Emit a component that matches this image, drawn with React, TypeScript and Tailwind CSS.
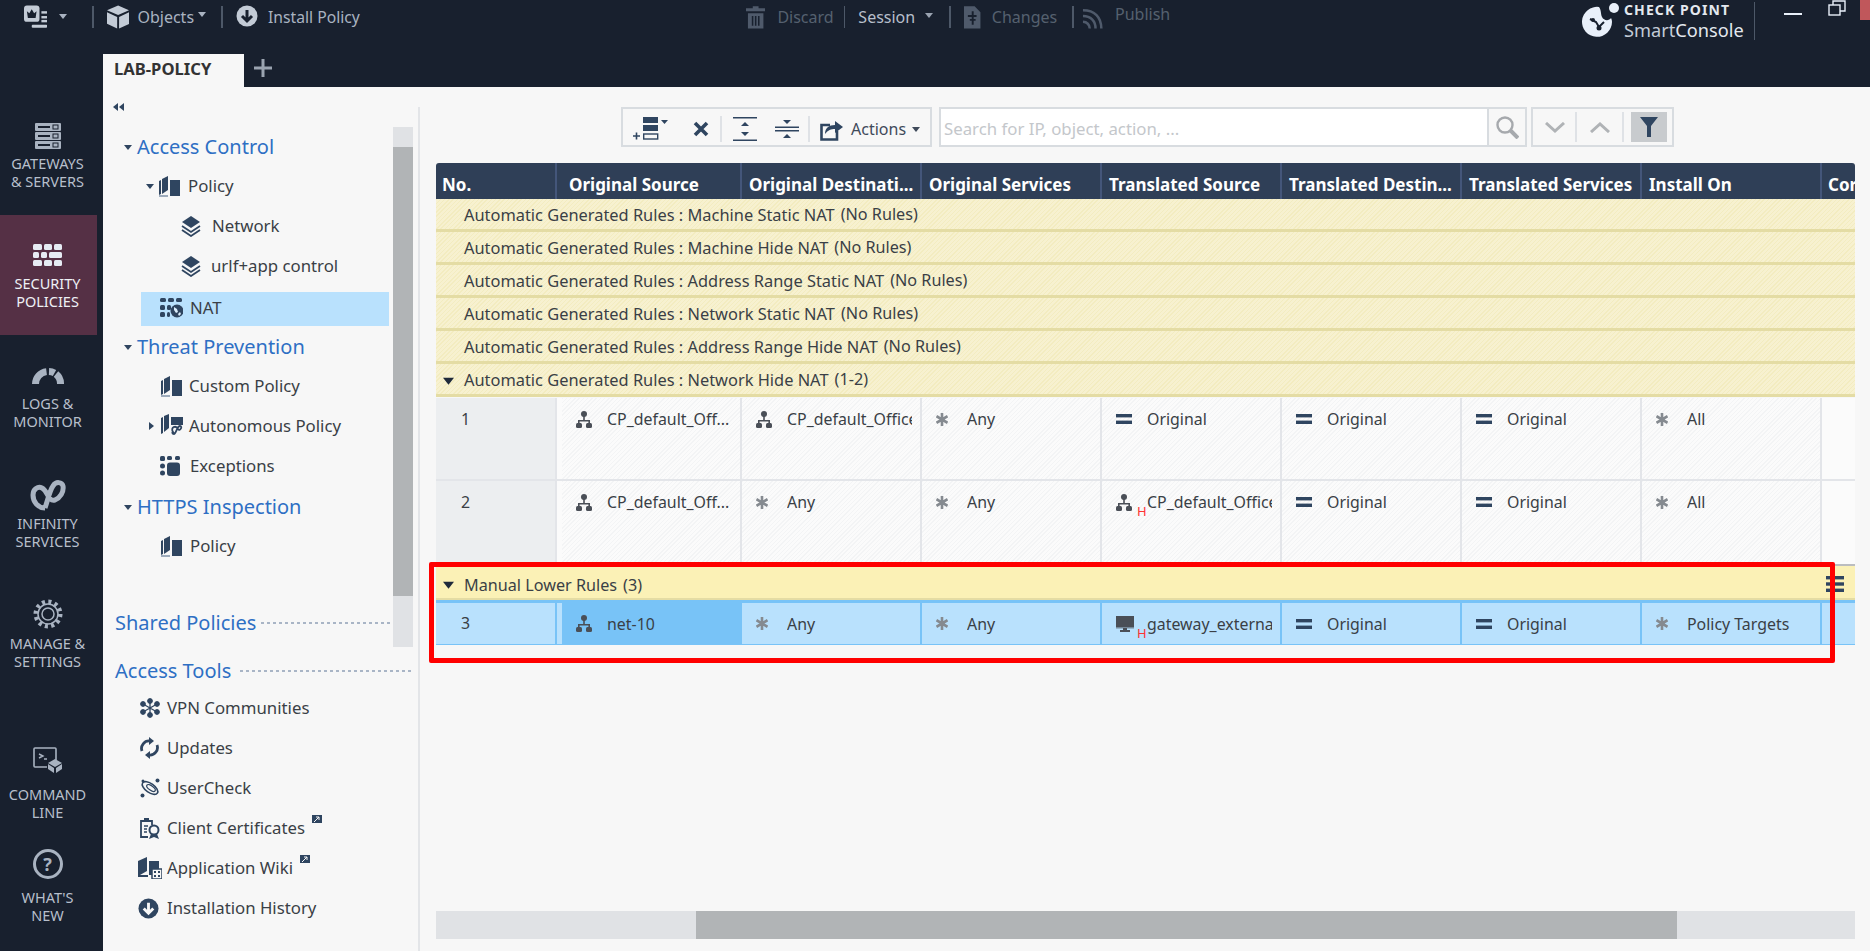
import React from 'react'

const NAVY = '#2f4560'

function Caret({ dir = 'down', color = '#2f4560', size = 8 }: { dir?: 'down' | 'right'; color?: string; size?: number }) {
  return (
    <svg width={size} height={size} viewBox="0 0 8 8" className="shrink-0">
      {dir === 'down' ? <polygon points="0,2 8,2 4,7" fill={color} /> : <polygon points="1,0 6,4 1,8" fill={color} />}
    </svg>
  )
}

function BookIcon() {
  return (
    <svg width="22" height="21" viewBox="0 0 22 21">
      <path d="M1 19V5l2-1v14z" fill={NAVY} />
      <path d="M4 3l6-3v14l-6 4z" fill={NAVY} />
      <rect x="12" y="4" width="10" height="16" fill={NAVY} />
      <path d="M1 20h9" stroke="#7f92a9" strokeWidth="1.5" />
    </svg>
  )
}

function LayersIcon() {
  return (
    <svg width="20" height="22" viewBox="0 0 20 22" fill="none">
      <polygon points="10,1 19,7 10,13 1,7" fill={NAVY} />
      <polyline points="1,11 10,17 19,11" stroke={NAVY} strokeWidth="1.8" />
      <polyline points="1,15 10,21 19,15" stroke={NAVY} strokeWidth="1.8" />
    </svg>
  )
}

function NatIcon() {
  return (
    <svg width="23" height="20" viewBox="0 0 23 20" fill={NAVY}>
      <rect x="0" y="0" width="6" height="4" rx="1.5" /><rect x="8" y="0" width="6" height="4" rx="1.5" /><rect x="16" y="0" width="6" height="4" rx="1.5" />
      <rect x="0" y="7" width="5" height="5" rx="1.5" /><rect x="7" y="7" width="4" height="5" rx="1.5" />
      <rect x="0" y="14" width="5" height="5" rx="1.5" /><rect x="7" y="14" width="3" height="5" rx="1.5" />
      <circle cx="17" cy="13" r="6.5" />
      <path d="M14 9l3 2 1 3-2 1-2-3zM18 16l2-2 1 2-2 2z" fill="#dbeefc" />
    </svg>
  )
}

function AutonomousIcon() {
  return (
    <svg width="24" height="24" viewBox="0 0 24 24" fill="none">
      <path d="M1 20V4l2-1v16z" fill={NAVY} />
      <path d="M4 2l5-2v14l-5 4z" fill={NAVY} />
      <path d="M11 3h12v8H11z" fill={NAVY} />
      <path d="M13 18c-3-5 3-7 5-3 2 3 5-3 2-3-3 0-4 8-6 8-2 0-2-2-1-2z" stroke={NAVY} strokeWidth="1.8" />
    </svg>
  )
}

function ExceptionsIcon() {
  return (
    <svg width="20" height="20" viewBox="0 0 20 20" fill={NAVY}>
      <rect x="0" y="0" width="5" height="5" rx="1.5" /><rect x="7" y="0" width="5" height="4" rx="1.5" /><rect x="15" y="0" width="5" height="4" rx="1.5" />
      <circle cx="2.5" cy="10" r="2.5" /><circle cx="2.5" cy="17" r="2.5" />
      <rect x="7" y="6.5" width="13" height="13.5" rx="3" />
    </svg>
  )
}

function VpnIcon() {
  return (
    <svg width="20" height="20" viewBox="0 0 20 20" fill={NAVY} stroke={NAVY}>
      <path d="M10 3v14M3 6l14 8M17 6L3 14" strokeWidth="1.3" />
      <circle cx="10" cy="3" r="2.4" /><circle cx="10" cy="17" r="2.4" /><circle cx="3" cy="6" r="2.4" /><circle cx="17" cy="6" r="2.4" /><circle cx="3" cy="14" r="2.4" /><circle cx="17" cy="14" r="2.4" />
    </svg>
  )
}

function UpdatesIcon() {
  return (
    <svg width="19" height="22" viewBox="0 0 19 22" fill="none">
      <path d="M2 14A7.5 7.5 0 0 1 10 4" stroke={NAVY} strokeWidth="2.8" />
      <polygon points="9,0 14,4 9,8" fill={NAVY} />
      <path d="M17 8a7.5 7.5 0 0 1-8 10" stroke={NAVY} strokeWidth="2.8" />
      <polygon points="10,14 5,18 10,22" fill={NAVY} />
    </svg>
  )
}

function UserCheckIcon() {
  return (
    <svg width="20" height="20" viewBox="0 0 20 20" fill="none">
      <ellipse cx="10" cy="10" rx="9" ry="4.5" transform="rotate(35 10 10)" stroke={NAVY} strokeWidth="1.6" />
      <ellipse cx="11" cy="10" rx="5" ry="2.2" transform="rotate(35 11 10)" stroke={NAVY} strokeWidth="1.2" />
      <circle cx="17.5" cy="2.5" r="2" fill={NAVY} /><circle cx="2.5" cy="17.5" r="2" fill={NAVY} /><circle cx="3" cy="3" r="1.5" fill={NAVY} />
    </svg>
  )
}

function CertIcon() {
  return (
    <svg width="21" height="22" viewBox="0 0 21 22" fill="none">
      <path d="M8 20H1V4h11v4" stroke={NAVY} strokeWidth="1.8" />
      <rect x="4" y="1" width="5" height="4" fill={NAVY} />
      <path d="M4 9h4M4 12h3M4 15h3" stroke={NAVY} strokeWidth="1.5" />
      <circle cx="14" cy="13" r="4.5" stroke={NAVY} strokeWidth="2" />
      <path d="M11 17l-2 5 5-2 5 2-2-5z" fill={NAVY} />
    </svg>
  )
}

function WikiIcon() {
  return (
    <svg width="25" height="22" viewBox="0 0 25 22">
      <path d="M1 18V4l9-4v14l-7 4z" fill={NAVY} />
      <path d="M1 19h10" stroke={NAVY} strokeWidth="2" />
      <rect x="12" y="4" width="10" height="14" fill={NAVY} />
      <rect x="15" y="12" width="10" height="10" fill="#f7f7f7" stroke={NAVY} strokeWidth="1.5" />
      <rect x="17" y="14" width="2" height="2" fill={NAVY} /><rect x="21" y="14" width="2" height="2" fill={NAVY} /><rect x="17" y="18" width="2" height="2" fill={NAVY} /><rect x="21" y="18" width="2" height="2" fill={NAVY} />
    </svg>
  )
}

function DownCircle({ size = 22, bg = NAVY, fg = '#f7f7f7' }: { size?: number; bg?: string; fg?: string }) {
  return (
    <svg width={size} height={size} viewBox="0 0 22 22" fill="none">
      <circle cx="11" cy="11" r="10.5" fill={bg} />
      <path d="M11 5v11M6 11l5 5 5-5" stroke={fg} strokeWidth="3" />
    </svg>
  )
}

function ExtLink() {
  return (
    <svg width="10" height="8" viewBox="0 0 10 8" className="mb-[18px] ml-[7px]">
      <rect width="10" height="8" fill={NAVY} />
      <path d="M2 7l5-5M4 2h3v3" stroke="#f7f7f7" strokeWidth="1" fill="none" />
    </svg>
  )
}

function TreeRow({ indent, caret, icon, iconW, label }: {
  indent: string
  caret?: 'down' | 'right'
  icon?: React.ReactNode
  iconW?: string
  label: string
}) {
  return (
    <div className={`flex h-[40px] items-center pb-[2px] text-[16.8px] text-[#3a3f46] whitespace-nowrap ${indent}`}>
      {caret && <span className="flex w-[12px] items-center"><Caret dir={caret} /></span>}
      {icon && <span className={`flex items-center ${iconW ?? ''}`}>{icon}</span>}
      <span>{label}</span>
    </div>
  )
}

function SectionRow({ label }: { label: string }) {
  return (
    <div className="flex h-[40px] items-center pl-[21px] text-[20px] text-[#2e6fc4] whitespace-nowrap">
      <span className="flex w-[13px] items-center"><Caret /></span>
      <span>{label}</span>
    </div>
  )
}

function ToolRow({ iconClass, icon, label, ext }: { iconClass: string; icon: React.ReactNode; label: string; ext?: boolean }) {
  return (
    <div className="flex h-[40px] items-center pb-[2px] text-[16.8px] text-[#3a3f46] whitespace-nowrap">
      <span className={`flex w-[64px] items-center ${iconClass}`}>{icon}</span>
      <span>{label}</span>
      {ext && <ExtLink />}
    </div>
  )
}

const DOTS = 'h-[2px] flex-1 bg-[repeating-linear-gradient(90deg,#a9b5c6_0,#a9b5c6_3px,transparent_3px,transparent_6px)]'

function TreePanel() {
  return (
    <div className="w-[315px] shrink-0 bg-[#f7f7f7]">
      <div className="flex h-[40px] items-center pl-[10px]">
        <svg width="11" height="8" viewBox="0 0 11 8" fill={NAVY}><polygon points="5,0 0,4 5,8" /><polygon points="11,0 6,4 11,8" /></svg>
      </div>
      <div className="flex h-[520px]">
        <div className="w-[290px]">
          <SectionRow label="Access Control" />
          <TreeRow indent="pl-[43px]" caret="down" icon={<BookIcon />} iconW="w-[30px]" label="Policy" />
          <TreeRow indent="pl-[78px]" icon={<LayersIcon />} iconW="w-[31px]" label="Network" />
          <TreeRow indent="pl-[78px]" icon={<LayersIcon />} iconW="w-[30px]" label="urlf+app control" />
          <div className="mb-[1px] ml-[38px] mr-[4px] mt-[5px] flex h-[34px] items-center bg-[#b9e1fd] pb-[3px] pl-[19px] text-[16.8px] text-[#3a3f46]">
            <span className="flex w-[30px] items-center"><NatIcon /></span>NAT
          </div>
          <SectionRow label="Threat Prevention" />
          <TreeRow indent="pl-[57px]" icon={<BookIcon />} iconW="w-[29px]" label="Custom Policy" />
          <TreeRow indent="pl-[45px]" caret="right" icon={<AutonomousIcon />} iconW="w-[29px]" label="Autonomous Policy" />
          <TreeRow indent="pl-[57px]" icon={<ExceptionsIcon />} iconW="w-[30px]" label="Exceptions" />
          <SectionRow label="HTTPS Inspection" />
          <TreeRow indent="pl-[57px]" icon={<BookIcon />} iconW="w-[30px]" label="Policy" />
          <div className="mt-[36px] flex h-[40px] items-center pl-[12px] text-[20px] text-[#2e6fc4]">
            <span className="whitespace-nowrap">Shared Policies</span>
            <span className={`ml-[5px] ${DOTS}`} />
          </div>
        </div>
        <div className="w-[20px] bg-[#e0e2e5] pb-[51px] pt-[20px]">
          <div className="h-full bg-[#b1b4b6]" />
        </div>
      </div>
      <div className="mt-[5px] flex h-[37px] items-center pl-[12px] text-[20px] text-[#2e6fc4]">
        <span className="whitespace-nowrap">Access Tools</span>
        <span className={`ml-[9px] mr-[7px] ${DOTS}`} />
      </div>
      <ToolRow iconClass="pl-[37px]" icon={<VpnIcon />} label="VPN Communities" />
      <ToolRow iconClass="pl-[37px]" icon={<UpdatesIcon />} label="Updates" />
      <ToolRow iconClass="pl-[37px]" icon={<UserCheckIcon />} label="UserCheck" />
      <ToolRow iconClass="pl-[37px]" icon={<CertIcon />} label="Client Certificates" ext />
      <ToolRow iconClass="pl-[34px]" icon={<WikiIcon />} label="Application Wiki" ext />
      <ToolRow iconClass="pl-[35px]" icon={<DownCircle size={21} />} label="Installation History" />
    </div>
  )
}

function RailItem({ label1, label2, icon, topClass, active, className }: {
  label1: string
  label2: string
  icon: React.ReactNode
  topClass: string
  active?: boolean
  className?: string
}) {
  return (
    <div className={`flex w-[97px] flex-col items-center pr-[2px] text-center text-[14.5px] leading-[18px] ${active ? 'bg-[#553045] text-[#eef1f6]' : 'text-[#b7bfcb]'} ${className ?? ''}`}>
      <div className={`flex h-[59px] items-start ${topClass}`}>{icon}</div>
      <div className="whitespace-nowrap">{label1}</div>
      <div className="whitespace-nowrap">{label2}</div>
    </div>
  )
}

function Rail() {
  const c = '#a9b3c1'
  return (
    <div className="w-[103px] shrink-0 bg-[#18202e] pt-[41px]">
      <RailItem className="h-[120px]" label1="GATEWAYS" label2="& SERVERS" topClass="pt-[28px]" icon={
        <svg width="26" height="26" viewBox="0 0 26 26">
          {[0, 9, 18].map(y => (
            <g key={y}>
              <rect x="0" y={y} width="26" height="8" rx="1" fill={c} />
              <rect x="3" y={y + 3} width="12" height="2" fill="#18202e" />
              <rect x="18" y={y + 2} width="5" height="4" fill="none" stroke="#18202e" />
            </g>
          ))}
        </svg>
      } />
      <RailItem className="h-[120px]" active label1="SECURITY" label2="POLICIES" topClass="pt-[29px]" icon={
        <svg width="29" height="22" viewBox="0 0 29 22" fill="#e6ebf3">
          <rect x="0" y="0" width="9" height="6" rx="1.5" /><rect x="11" y="0" width="8" height="6" rx="1.5" /><rect x="21" y="0" width="8" height="6" rx="1.5" />
          <rect x="0" y="8" width="6" height="6" rx="1.5" /><rect x="8" y="8" width="6" height="6" rx="1.5" /><rect x="16" y="8" width="13" height="6" rx="1.5" />
          <rect x="0" y="16" width="9" height="6" rx="1.5" /><rect x="11" y="16" width="8" height="6" rx="1.5" /><rect x="21" y="16" width="8" height="6" rx="1.5" />
        </svg>
      } />
      <RailItem className="h-[120px]" label1="LOGS &" label2="MONITOR" topClass="pt-[32px]" icon={
        <svg width="32" height="17" viewBox="0 0 32 17" fill="none" stroke={c} strokeWidth="7">
          <path d="M3.5 17A12.5 12.5 0 0 1 14.5 4.6" /><path d="M17 4.5a12.5 12.5 0 0 1 5.5 1.5" /><path d="M24 7a12.5 12.5 0 0 1 4.5 10" />
        </svg>
      } />
      <RailItem className="h-[120px]" label1="INFINITY" label2="SERVICES" topClass="pt-[24px]" icon={
        <svg width="36" height="32" viewBox="0 0 36 32" fill="none" stroke={c} strokeWidth="5">
          <path d="M15 29C8 29 3 23 3 16 3 10 8 7 12 9c6 3 6 14 13 12 5-2 9-8 8-14-1-4-7-5-10 0-3 4-5 13-8 22" />
        </svg>
      } />
      <RailItem className="h-[120px]" label1="MANAGE &" label2="SETTINGS" topClass="pt-[24px]" icon={
        <svg width="30" height="30" viewBox="0 0 30 30" fill="none" stroke={c}>
          <circle cx="15" cy="15" r="12" strokeWidth="5" strokeDasharray="3 3.28" />
          <circle cx="15" cy="15" r="10" strokeWidth="1.5" />
          <circle cx="15" cy="15" r="6" strokeWidth="1.5" />
        </svg>
      } />
      <RailItem className="mt-[31px] h-[103px]" label1="COMMAND" label2="LINE" topClass="pt-[21px]" icon={
        <svg width="30" height="26" viewBox="0 0 30 26" fill="none" stroke={c}>
          <path d="M14 20H2a1 1 0 0 1-1-1V2a1 1 0 0 1 1-1h20a1 1 0 0 1 1 1v11" strokeWidth="1.6" />
          <path d="M6 7l4 2-4 2M11 12h3" strokeWidth="1.4" />
          <polygon points="22,12 29,16 22,20 15,16" fill={c} stroke="none" />
          <polygon points="15,17 21,21 21,26 15,22" fill={c} stroke="none" /><polygon points="29,17 23,21 23,26 29,22" fill={c} stroke="none" />
        </svg>
      } />
      <RailItem className="h-[120px]" label1="WHAT'S" label2="NEW" topClass="pt-[20px]" icon={
        <div className="flex h-[30px] w-[30px] items-center justify-center rounded-full border-[3px] border-[#a9b3c1] text-[18px] font-bold leading-none text-[#a9b3c1]">?</div>
      } />
    </div>
  )
}

function Sep({ className }: { className: string }) {
  return <div className={`mt-[1px] h-[22px] w-[2px] shrink-0 bg-[#4d5868] ${className}`} />
}

function TopBar() {
  const c = '#c3cbd6'
  const dim = '#4f5a6b'
  return (
    <div className="flex h-[54px] shrink-0 items-start bg-[#18202e] pl-[24px] pt-[5px] text-[16px] leading-[24px] text-[#a9b3c1]">
      <svg width="24" height="24" viewBox="0 0 24 24" fill={c}>
        <rect x="0" y="0" width="16" height="17" rx="3" />
        <path d="M3 6l2.5 2L8 4l2.5 4L13 6l-1 7H4z" fill="#18202e" />
        <rect x="18" y="6" width="6" height="2.5" /><rect x="18" y="11" width="6" height="2.5" /><rect x="18" y="15" width="6" height="2.5" /><rect x="8" y="20" width="16" height="3" rx="1" />
      </svg>
      <span className="ml-[12px] mt-[7px]"><Caret color="#a9b3c1" /></span>
      <Sep className="ml-[25px]" />
      <svg width="23" height="24" viewBox="0 0 23 24" fill={c} className="ml-[13px]">
        <polygon points="11.5,0 23,5 11.5,10 0,5" /><polygon points="0,7 10.5,12 10.5,24 0,19" /><polygon points="23,7 12.5,12 12.5,24 23,19" />
      </svg>
      <span className="ml-[8px] w-[57px] whitespace-nowrap">Objects</span>
      <span className="ml-[4px] mt-[5px]"><Caret color="#a9b3c1" /></span>
      <Sep className="ml-[15px]" />
      <span className="ml-[13px]"><DownCircle size={22} bg={c} fg="#18202e" /></span>
      <span className="ml-[10px] w-[91px] whitespace-nowrap text-[15.7px]">Install Policy</span>
      <svg width="20" height="24" viewBox="0 0 20 24" fill={dim} className="ml-[387px]">
        <path d="M7 3V1h6v2h7v3H0V3z" /><path d="M2 8h16v16H2zM6 11v10h1.6V11zM9.2 11v10h1.6V11zM12.4 11v10H14V11z" fillRule="evenodd" />
      </svg>
      <span className="ml-[12px] w-[54px] whitespace-nowrap text-[#55606f]">Discard</span>
      <div className="ml-[13px] mt-[1px] h-[22px] w-px bg-[#4d5868]" />
      <span className="ml-[13px] w-[56px] whitespace-nowrap text-[#b7bfcb]">Session</span>
      <span className="ml-[11px] mt-[6px]"><Caret color="#9aa3b0" /></span>
      <Sep className="ml-[16px]" />
      <svg width="17" height="24" viewBox="0 0 17 24" fill={dim} className="ml-[13px]">
        <path d="M0 1h11l6 6v17H0zM8 6v4H4v2h4v2H6v2h2v4h2v-4h2v-2h-2v-2h3v-2h-3V6z" fillRule="evenodd" />
      </svg>
      <span className="ml-[11px] w-[65px] whitespace-nowrap text-[#55606f]">Changes</span>
      <Sep className="ml-[15px]" />
      <svg width="24" height="25" viewBox="0 0 24 25" fill="none" stroke={dim} strokeWidth="2.6" className="ml-[8px] -mt-px">
        <path d="M1 6c12 0 19 7 19 19" /><path d="M1 12c8 0 13 5 13 13" /><path d="M1 18c4 0 7 3 7 7" />
      </svg>
      <span className="ml-[10px] -mt-[3px] w-[53px] whitespace-nowrap text-[#55606f]">Publish</span>

      <div className="ml-[414px] -mt-[5px] flex h-[48px] items-start">
        <svg width="38" height="38" viewBox="0 0 38 38" className="mt-[2px]" fill="#e9f0fa">
          <path d="M17 5a15 15 0 1 0 13 15c0-2-.5-3-1-4-2 3-7 3-9-1-1.5-3-.5-7-3-10z" />
          <circle cx="32" cy="6" r="5" />
          <path d="M8 17l6 3 3 5 5-5" stroke="#18202e" strokeWidth="2" fill="none" />
          <circle cx="11" cy="18" r="2" fill="#18202e" /><circle cx="17" cy="26" r="2.5" fill="#18202e" />
        </svg>
        <div className="ml-[4px] w-[129px]">
          <div className="mt-[1px] whitespace-nowrap text-[14px] font-bold leading-[18px] tracking-[1.1px] text-[#e3e8ef]">CHECK POINT</div>
          <div className="-mt-[2px] whitespace-nowrap text-[18.2px] leading-[26px] text-[#c3cbd6]">Smart<span className="text-[#e3e8ef]">Console</span></div>
        </div>
        <div className="ml-[1px] mt-[2px] h-[38px] w-px bg-[#4d5868]" />
        <div className="ml-[29px] mt-[13px] h-[2px] w-[18px] bg-[#e9f0fa]" />
        <svg width="18" height="16" viewBox="0 0 18 16" fill="none" stroke="#e9f0fa" strokeWidth="1.4" className="ml-[26px]">
          <rect x="1" y="5" width="11" height="10" /><path d="M5 5V1h12v10h-5" />
        </svg>
        <div className="ml-[14px] h-[20px] w-[10px] bg-[#c0575b]" />
      </div>
    </div>
  )
}

function Toolbar() {
  return (
    <div className="flex h-[40px] items-stretch pl-[201px]">
      <div className="flex h-[40px] w-[311px] items-center border-2 border-[#d8dce0] pl-[10px] pt-[3px] text-[16px] text-[#3f4a5a]">
        <svg width="35" height="24" viewBox="0 0 35 24" fill={NAVY}>
          <rect x="10" y="0" width="15" height="6" /><rect x="10" y="8" width="15" height="6" />
          <rect x="10.7" y="17" width="14" height="5" fill="none" stroke={NAVY} strokeWidth="1.4" />
          <path d="M0 19h7M3.5 15.5v7" stroke={NAVY} strokeWidth="1.6" />
          <polygon points="28,3 35,3 31.5,7" />
        </svg>
        <svg width="16" height="16" viewBox="0 0 16 16" className="ml-[25px]"><path d="M2 2l12 12M14 2L2 14" stroke={NAVY} strokeWidth="3.6" /></svg>
        <div className="ml-[11px] h-[26px] w-[2px] bg-[#dfe2e6]" />
        <svg width="24" height="24" viewBox="0 0 24 24" className="ml-[11px]" fill={NAVY}>
          <rect x="0" y="0" width="24" height="1.5" /><rect x="0" y="22.5" width="24" height="1.5" />
          <polygon points="12,5 16,9 8,9" /><polygon points="12,19 16,15 8,15" />
        </svg>
        <svg width="24" height="24" viewBox="0 0 24 24" className="ml-[18px]" fill={NAVY}>
          <rect x="0" y="9.5" width="24" height="1.5" /><rect x="0" y="13" width="24" height="1.5" />
          <polygon points="12,7 16,3 8,3" /><polygon points="12,17 16,21 8,21" />
        </svg>
        <div className="ml-[9px] h-[26px] w-[2px] bg-[#dfe2e6]" />
        <svg width="23" height="24" viewBox="0 0 23 24" className="ml-[10px]" fill="none">
          <path d="M10 8H1.5v14.5H17V14" stroke={NAVY} strokeWidth="2.6" />
          <path d="M5 17c0-6 4-9 10-9V4l8 6-8 6v-4c-4 0-7 1-10 5z" fill={NAVY} />
        </svg>
        <span className="ml-[8px] w-[56px] whitespace-nowrap">Actions</span>
        <span className="ml-[5px]"><Caret color="#3f4a5a" /></span>
      </div>
      <div className="ml-[7px] flex h-[40px] w-[588px] border-2 border-[#d8dce0] bg-white">
        <div className="flex flex-1 items-center whitespace-nowrap pl-[3px] pt-[3px] text-[16.8px] text-[#c4c7cb]">Search for IP, object, action, ...</div>
        <div className="flex w-[38px] items-center justify-center border-l-2 border-[#d8dce0] bg-[#f7f7f7]">
          <svg width="24" height="24" viewBox="0 0 24 24" fill="none" stroke="#a6a9ad"><circle cx="10" cy="10" r="7.5" strokeWidth="2.4" /><path d="M15 15l8 8" strokeWidth="4" /></svg>
        </div>
      </div>
      <div className="ml-[4px] flex h-[40px] w-[143px] items-center border-2 border-[#d8dce0] pl-[12px]">
        <svg width="20" height="11" viewBox="0 0 20 11" fill="none" stroke="#b0b3b6" strokeWidth="3"><path d="M1 1l9 8 9-8" /></svg>
        <div className="ml-[10px] h-[30px] w-[2px] bg-[#dfe2e6]" />
        <svg width="20" height="11" viewBox="0 0 20 11" fill="none" stroke="#b0b3b6" strokeWidth="3" className="ml-[13px]"><path d="M1 10l9-8 9 8" /></svg>
        <div className="ml-[12px] h-[30px] w-[2px] bg-[#dfe2e6]" />
        <div className="ml-[7px] flex h-[30px] w-[36px] items-center justify-center bg-[#c8cbce]">
          <svg width="18" height="20" viewBox="0 0 18 20" fill={NAVY}><polygon points="0,0 18,0 11,9 11,20 7,20 7,9" /></svg>
        </div>
      </div>
    </div>
  )
}

function NetIcon() {
  return (
    <svg width="16" height="17" viewBox="0 0 16 17" fill="#4a4f57">
      <circle cx="8" cy="3" r="3" />
      <path d="M7.2 5h1.6v4h5.2v3h-1.6v-1.4H3.6V12H2V9h5.2z" />
      <rect x="0" y="12" width="6" height="5" rx="1.5" /><rect x="10" y="12" width="6" height="5" rx="1.5" />
    </svg>
  )
}

function AnyIcon() {
  return (
    <svg width="12" height="13" viewBox="0 0 12 13" stroke="#858a90" strokeWidth="2.6">
      <path d="M6 0v13M.5 3.2l11 6.6M11.5 3.2l-11 6.6" />
    </svg>
  )
}

function EqIcon() {
  return (
    <svg width="16" height="10" viewBox="0 0 16 10" fill={NAVY}><rect width="16" height="3.4" /><rect y="6.6" width="16" height="3.4" /></svg>
  )
}

function GatewayIcon() {
  return (
    <svg width="18" height="16" viewBox="0 0 18 16" fill="#4a4f57">
      <rect width="18" height="11" /><rect y="11" width="18" height="1.5" opacity=".6" /><rect x="7" y="12" width="4" height="2" /><rect x="4" y="14" width="10" height="2" />
    </svg>
  )
}

type CellDef = { icon?: 'net' | 'any' | 'eq' | 'gw'; text: string; hide?: boolean; strong?: boolean }

const ICONS = { net: <NetIcon />, any: <AnyIcon />, eq: <EqIcon />, gw: <GatewayIcon /> }

function Cell({ cell, selected }: { cell: CellDef; selected?: boolean }) {
  const bg = selected
    ? cell.strong ? 'bg-[#78c3f7]' : 'border-r-2 border-[#78c3f7] bg-[#b9e1fd]'
    : 'border-r-2 border-[#e3e5e9] bg-[repeating-linear-gradient(135deg,#f3f4f5_0,#f3f4f5_1px,#fbfbfb_1px,#fbfbfb_3px)]'
  return (
    <div className={`relative overflow-hidden pl-[14px] ${bg}`}>
      <div className={`flex items-center text-[15.9px] leading-[22px] text-[#3a3f46] ${selected ? 'h-[41px]' : 'h-[42px]'}`}>
        <span className="flex w-[31px] shrink-0 items-center">{cell.icon && ICONS[cell.icon]}</span>
        {cell.hide ? (
          <span className="absolute left-[35px] top-[23px] text-[13px] leading-[14px] text-[#f33]">H</span>
        ) : null}
        <span className="w-[125px] overflow-hidden whitespace-nowrap">{cell.text}</span>
      </div>
    </div>
  )
}

function NoCell({ n, selected }: { n: number; selected?: boolean }) {
  return (
    <div className={`flex ${selected ? 'bg-[#b9e1fd]' : 'bg-[#eceef0]'}`}>
      <div className={`flex-1 pl-[25px] text-[15.9px] text-[#3a3f46] ${selected ? 'leading-[41px]' : 'leading-[42px]'}`}>{n}</div>
      <div className={`w-[2px] ${selected ? 'bg-[#78c3f7]' : 'bg-[#e3e5e9]'}`} />
      <div className={`w-[5px] ${selected ? 'bg-[#b9e1fd]' : 'bg-[#fbfbfb]'}`} />
    </div>
  )
}

const GRID = 'grid grid-cols-[126px_repeat(7,180px)_33px]'

const AUTO_GROUPS = ['Machine Static NAT', 'Machine Hide NAT', 'Address Range Static NAT', 'Network Static NAT', 'Address Range Hide NAT']

const HEADERS = ['No.', 'Original Source', 'Original Destinati...', 'Original Services', 'Translated Source', 'Translated Destin...', 'Translated Services', 'Install On', 'Cor']

const ORIG: CellDef = { icon: 'eq', text: 'Original' }
const ANY: CellDef = { icon: 'any', text: 'Any' }

const ROW1: CellDef[] = [
  { icon: 'net', text: 'CP_default_Off...' }, { icon: 'net', text: 'CP_default_Office' }, ANY, ORIG, ORIG, ORIG, { icon: 'any', text: 'All' },
]
const ROW2: CellDef[] = [
  { icon: 'net', text: 'CP_default_Off...' }, ANY, ANY, { icon: 'net', text: 'CP_default_Office', hide: true }, ORIG, ORIG, { icon: 'any', text: 'All' },
]
const ROW3: CellDef[] = [
  { icon: 'net', text: 'net-10', strong: true }, ANY, ANY, { icon: 'gw', text: 'gateway_externa', hide: true }, ORIG, ORIG, { icon: 'any', text: 'Policy Targets' },
]

function GroupRow({ name, count, open }: { name: string; count: string; open?: boolean }) {
  return (
    <div className="flex h-[33px] items-center whitespace-nowrap border-b-[3px] border-[#e4dca4] bg-[repeating-linear-gradient(135deg,#f3ecc0_0,#f3ecc0_1px,#f7f1d0_1px,#f7f1d0_3px)] pt-[2px] text-[16.4px] text-[#3a3f46]">
      <span className="flex w-[28px] pl-[7px]">{open && <Caret color="#1f2a3a" size={11} />}</span>
      <span>Automatic Generated Rules : {name}</span>
      <span className="ml-[6px] -translate-y-px text-[16.2px]">{count}</span>
    </div>
  )
}

function RulesTable() {
  return (
    <div className="relative ml-[16px] mt-[16px] w-[1419px]">
      <div className={`${GRID} h-[36px] overflow-hidden rounded-t-[3px] bg-[#2f3f57] text-[17px] font-bold leading-[36px] text-white`}>
        {HEADERS.map((h, i) => (
          <div key={h} className={`overflow-hidden whitespace-nowrap pt-[4px] ${i === 0 ? 'flex pl-[6px]' : i === 8 ? 'pl-[6px]' : 'border-r-2 border-[#44567a] pl-[7px]'}`}>
            {i === 0 ? (
              <>
                <span className="flex-1">No.</span>
                <span className="-mt-[4px] h-[36px] w-[2px] bg-[#44567a]" />
                <span className="w-[5px]" />
              </>
            ) : h}
          </div>
        ))}
      </div>
      {AUTO_GROUPS.map(g => <GroupRow key={g} name={g} count="(No Rules)" />)}
      <GroupRow name="Network Hide NAT" count="(1-2)" open />
      <div className={`${GRID} mt-px h-[83px] border-b-2 border-[#e3e5e9]`}>
        <NoCell n={1} />
        {ROW1.map((c, i) => <Cell key={i} cell={c} />)}
        <div className="bg-[#fbfbfb]" />
      </div>
      <div className={`${GRID} h-[85px] border-b-2 border-[#bbbdc0]`}>
        <NoCell n={2} />
        {ROW2.map((c, i) => <Cell key={i} cell={c} />)}
        <div className="bg-[#fbfbfb]" />
      </div>
      <div className="flex h-[34px] items-center whitespace-nowrap border-b-2 border-[#e4dca4] bg-[#fbf1b6] pr-[11px] pt-[4px] text-[16.2px] text-[#3a3f46]">
        <span className="flex w-[28px] pl-[7px]"><Caret color="#1f2a3a" size={11} /></span>
        <span className="mt-[3px]">Manual Lower Rules</span>
        <span className="ml-[6px] mt-[3px]">(3)</span>
        <svg width="18" height="16" viewBox="0 0 18 16" fill={NAVY} className="ml-auto">
          <rect width="18" height="3.4" /><rect y="6.3" width="18" height="3.4" /><rect y="12.6" width="18" height="3.4" />
        </svg>
      </div>
      <div className={`${GRID} h-[45px] border-y-[2px] border-t-[3px] border-[#78c3f7]`}>
        <NoCell n={3} selected />
        {ROW3.map((c, i) => <Cell key={i} cell={c} selected />)}
        <div className="bg-[#b9e1fd]" />
      </div>
      <div className="absolute left-[-7px] top-[399px] z-10 h-[101px] w-[1406px] rounded-[2px] border-[5px] border-[#ff0000]" />
    </div>
  )
}

export default function App() {
  return (
    <div className="flex h-[951px] w-[1870px] flex-col overflow-hidden bg-[#18202e] font-['Noto_Sans',sans-serif]">
      <TopBar />
      <div className="flex flex-1">
        <Rail />
        <div className="flex flex-1 flex-col">
          <div className="flex h-[33px] items-start bg-[#18202e]">
            <div className="flex h-[33px] w-[141px] items-center bg-[#f7f7f7] pb-[2px] pl-[11px] text-[16.6px] font-bold text-[#333]">LAB-POLICY</div>
            <svg width="18" height="18" viewBox="0 0 18 18" className="ml-[10px] mt-[5px]" fill="#9aa3b0"><rect x="7.5" width="3" height="18" /><rect y="7.5" width="18" height="3" /></svg>
          </div>
          <div className="flex flex-1 bg-[#f7f7f7]">
            <TreePanel />
            <div className="mt-[20px] w-[2px] bg-[#e3e5e8]" />
            <div className="flex-1 pt-[20px]">
              <Toolbar />
              <RulesTable />
              <div className="ml-[16px] mt-[266px] h-[28px] w-[1419px] bg-[#e0e2e5] pl-[260px]">
                <div className="h-full w-[981px] bg-[#b1b4b6]" />
              </div>
            </div>
          </div>
        </div>
      </div>
    </div>
  )
}
